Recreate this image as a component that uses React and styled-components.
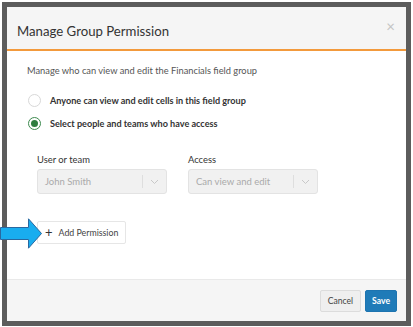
import React from "react";
import styled, { createGlobalStyle } from "styled-components";

const GlobalStyle = createGlobalStyle`
  html, body {
    margin: 0;
    padding: 0;
    background: #ffffff;
    font-family: Lato, "Open Sans", sans-serif;
  }
`;

const Page = styled.div`
  position: relative;
  width: 413px;
  height: 327px;
  padding: 2px 2px 1px 2px;
  box-sizing: border-box;
`;

const Backdrop = styled.div`
  background: #5c5c5c;
  padding: 5px;
  height: 100%;
  box-sizing: border-box;
`;

const Modal = styled.div`
  display: flex;
  flex-direction: column;
  height: 100%;
  background: #fff;
`;

const Header = styled.div`
  display: flex;
  align-items: center;
  justify-content: space-between;
  height: 42px;
  padding: 0 10px;
  background: #f5f5f5;
  border-bottom: 2px solid #f39a3c;
`;

const Title = styled.h2`
  margin: 6px 0 0 0;
  font-size: 13.2px;
  font-weight: 400;
  color: #333;
`;

const Close = styled.span`
  font-size: 15px;
  color: #c4c4c4;
  margin-top: -4px;
  margin-right: 1px;
`;

const Body = styled.div`
  flex: 1;
  padding: 13px 20px 0 20px;
`;

const Intro = styled.p`
  margin: 0 0 12px 0;
  font-size: 9.3px;
  line-height: 13px;
  color: #555;
`;

const RadioRow = styled.label`
  display: flex;
  align-items: center;
  gap: 9px;
  height: 23px;
  font-size: 9.1px;
  line-height: 12px;
  font-weight: 700;
  color: #333;
`;

const Radio = styled.span`
  box-sizing: border-box;
  flex: none;
  width: 13px;
  height: 13px;
  margin-left: 1px;
  border-radius: 50%;
  border: 1px solid ${(p) => (p.checked ? "#3d8a4e" : "#d8d8d8")};
  display: flex;
  align-items: center;
  justify-content: center;
  &::after {
    content: "";
    width: 7px;
    height: 7px;
    border-radius: 50%;
    background: ${(p) => (p.checked ? "#2f7d3f" : "transparent")};
  }
`;

const Fields = styled.div`
  display: flex;
  gap: 21px;
  margin: 19px 0 0 10px;
`;

const Field = styled.div`
  display: flex;
  flex-direction: column;
  gap: 3px;
`;

const Label = styled.span`
  font-size: 9.4px;
  line-height: 12px;
  color: #333;
`;

const Select = styled.div`
  box-sizing: border-box;
  display: flex;
  align-items: center;
  width: ${(p) => p.w}px;
  height: 25px;
  background: #f1f1f1;
  border: 1px solid #e3e3e3;
  border-radius: 3px;
  color: #aaa;
  font-size: 9.5px;
`;

const SelectValue = styled.span`
  flex: 1;
  padding-left: 7px;
`;

const Chevron = styled.span`
  display: flex;
  align-items: center;
  justify-content: center;
  width: 23px;
  height: 13px;
  border-left: 1px solid #dedede;
`;

const AddButton = styled.button`
  display: flex;
  align-items: center;
  gap: 6px;
  margin: 27px 0 0 10px;
  height: 23px;
  padding: 0 7px 0 7px;
  background: #fff;
  border: 1px solid #e6e6e6;
  border-radius: 2px;
  font-family: Lato, sans-serif;
  font-size: 8.8px;
  color: #444;
`;

const Plus = styled.span`
  font-size: 13px;
  line-height: 1;
  color: #333;
  margin-top: -1px;
`;

const Footer = styled.div`
  display: flex;
  justify-content: flex-end;
  align-items: center;
  gap: 4px;
  height: 41px;
  padding: 0 9px;
  background: #f5f5f5;
  border-top: 1px solid #e9e9e9;
`;

const Button = styled.button`
  height: 22px;
  padding: 0 ${(p) => (p.primary ? 6 : 7)}px;
  border-radius: 2px;
  border: 1px solid ${(p) => (p.primary ? "#1d74b0" : "#dcdcdc")};
  background: ${(p) => (p.primary ? "#1f7bb8" : "#efefef")};
  color: ${(p) => (p.primary ? "#fff" : "#444")};
  font-family: Lato, sans-serif;
  font-size: 8.6px;
  font-weight: ${(p) => (p.primary ? 700 : 400)};
`;

const Arrow = styled.svg`
  position: absolute;
  left: 0;
  top: 218px;
`;

const ChevronIcon = () => (
  <svg width="9" height="6" viewBox="0 0 9 6">
    <path d="M1 1 L4.5 4.5 L8 1" fill="none" stroke="#c8c8c8" strokeWidth="1" />
  </svg>
);

export default function App() {
  return (
    <Page>
      <GlobalStyle />
      <Backdrop>
        <Modal>
          <Header>
            <Title>Manage Group Permission</Title>
            <Close>×</Close>
          </Header>
          <Body>
            <Intro>Manage who can view and edit the Financials field group</Intro>
            <RadioRow>
              <Radio />
              Anyone can view and edit cells in this field group
            </RadioRow>
            <RadioRow>
              <Radio checked />
              Select people and teams who have access
            </RadioRow>
            <Fields>
              <Field>
                <Label>User or team</Label>
                <Select w={130}>
                  <SelectValue>John Smith</SelectValue>
                  <Chevron>
                    <ChevronIcon />
                  </Chevron>
                </Select>
              </Field>
              <Field>
                <Label>Access</Label>
                <Select w={130}>
                  <SelectValue>Can view and edit</SelectValue>
                  <Chevron>
                    <ChevronIcon />
                  </Chevron>
                </Select>
              </Field>
            </Fields>
            <AddButton>
              <Plus>+</Plus>
              Add Permission
            </AddButton>
          </Body>
          <Footer>
            <Button>Cancel</Button>
            <Button primary>Save</Button>
          </Footer>
        </Modal>
      </Backdrop>
      <Arrow width="43" height="31" viewBox="0 0 43 31">
        <path
          d="M0.5 9.5 L28.5 9.5 L28.5 0.8 L41.5 15.5 L28.5 30.2 L28.5 21.5 L0.5 21.5 Z"
          fill="#19adef"
          stroke="#2a68a0"
          strokeWidth="1"
        />
      </Arrow>
    </Page>
  );
}
